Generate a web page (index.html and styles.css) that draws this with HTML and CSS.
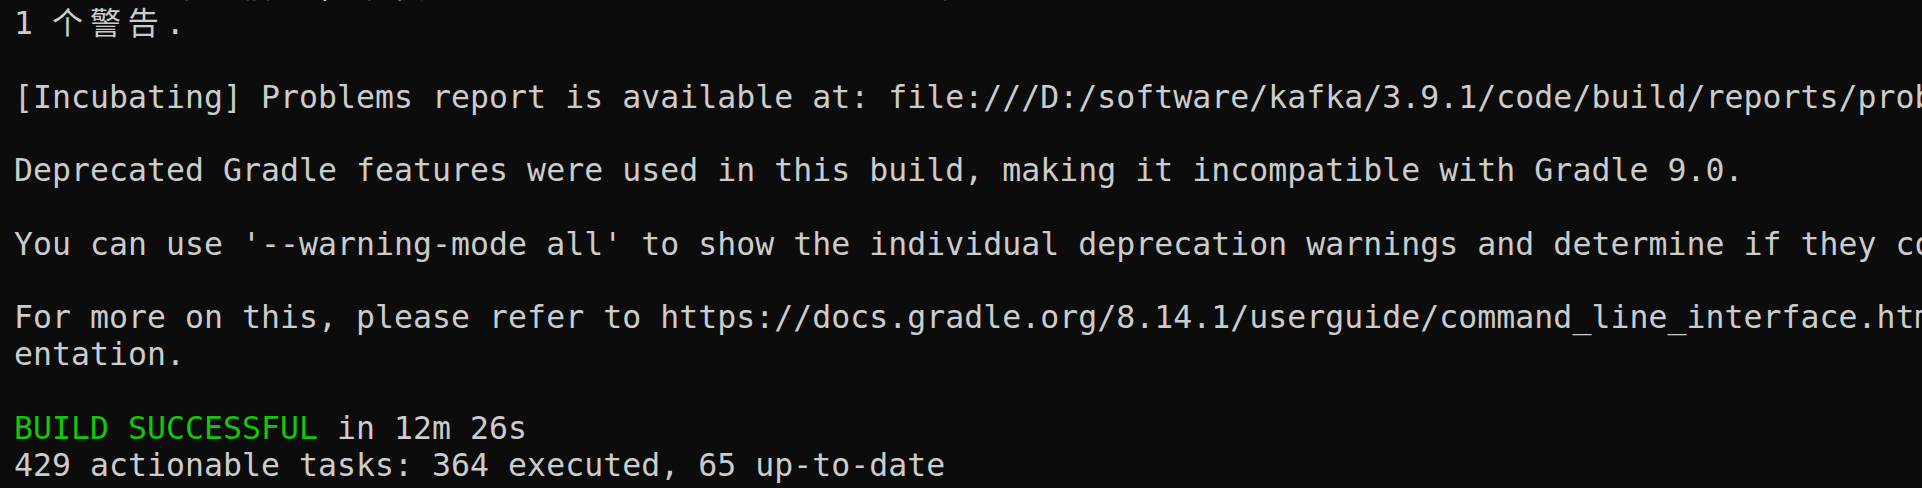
FILE: index.html
```html
<!DOCTYPE html>
<html lang="zh-CN">
<head>
<meta charset="utf-8">
<title>Terminal</title>
<link rel="stylesheet" href="styles.css">
</head>
<body>
<main class="term">
<div class="line"><span class="cjk">注</span>: <span class="cjk">有关详细信息</span>, <span class="cjk">请使用</span> -Xlint:unchecked <span class="cjk">重新编译。</span></div>
<div class="line">1 <span class="cjk">个警告</span>.</div>
<div class="line"></div>
<div class="line">[Incubating] Problems report is available at: file:///D:/software/kafka/3.9.1/code/build/reports/problems/problems-report.html</div>
<div class="line"></div>
<div class="line">Deprecated Gradle features were used in this build, making it incompatible with Gradle 9.0.</div>
<div class="line"></div>
<div class="line">You can use '--warning-mode all' to show the individual deprecation warnings and determine if they come from your own scripts or plugins.</div>
<div class="line"></div>
<div class="line">For more on this, please refer to https://docs.gradle.org/8.14.1/userguide/command_line_interface.html#sec:command_line_warnings in the Gradle docum</div>
<div class="line">entation.</div>
<div class="line"></div>
<div class="line"><span class="ok">BUILD SUCCESSFUL</span> in 12m 26s</div>
<div class="line">429 actionable tasks: 364 executed, 65 up-to-date</div>
</main>
</body>
</html>
```

FILE: styles.css
```css
html, body {
  margin: 0;
  padding: 0;
  background: #0c0c0c;
  overflow: hidden;
}

.term {
  margin-top: -31.8px;
  padding-left: 14px;
  color: #cccccc;
  font-family: "DejaVu Sans Mono", "Noto Sans CJK SC", monospace;
  font-size: 31.5px;
  line-height: 36.8px;
  letter-spacing: 0.04px;
  overflow: hidden;
}

.line {
  height: 36.8px;
  white-space: pre;
}

.cjk {
  font-family: "Noto Sans CJK SC", sans-serif;
  font-size: 31px;
  line-height: 0;
  letter-spacing: 6.9px;
}

.ok {
  color: #16c60c;
}
```
